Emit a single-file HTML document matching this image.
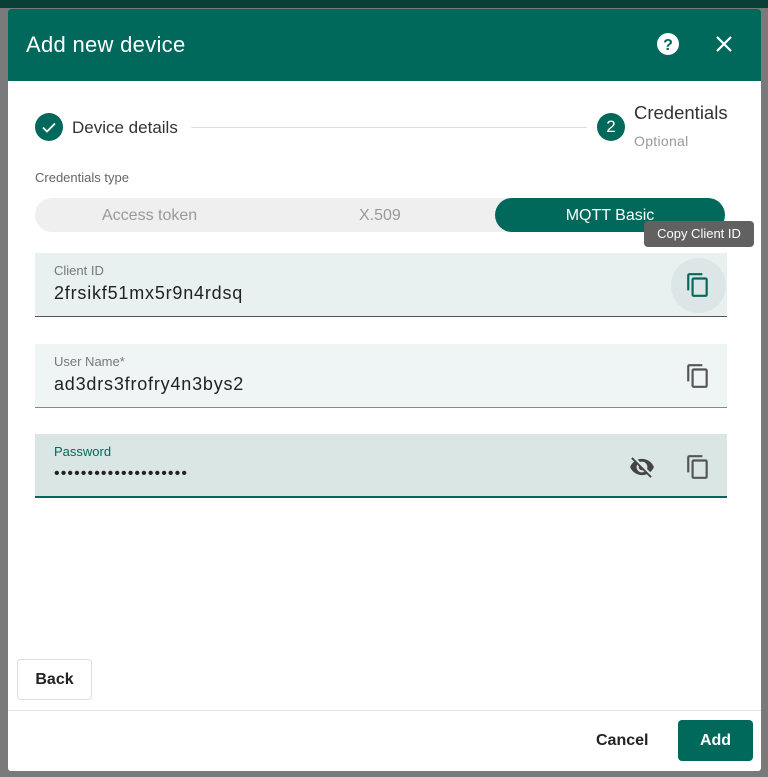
<!DOCTYPE html>
<html><head><meta charset="utf-8"><style>
*{box-sizing:border-box;margin:0;padding:0}
body{width:768px;height:777px;background:#7a7a7a;font-family:"Liberation Sans",sans-serif;position:relative;overflow:hidden}
.bgtop{position:absolute;left:0;top:0;width:768px;height:8px;background:#0a3f37}
.dlg{position:absolute;left:8px;top:9px;width:753px;height:762px;background:#fff;border-radius:3px;overflow:hidden}
.hdr{height:72px;background:#00695c;color:#fff;position:relative}
.hdr h1{position:absolute;left:18px;top:23px;font-size:22px;font-weight:normal;letter-spacing:.3px}
.abs{position:absolute}
.lbl{font-size:13px;color:#666}
.field{position:absolute;left:27px;width:692px;height:64px;border-bottom:1px solid #555}
.field .l{position:absolute;left:19px;top:10px;font-size:13px;color:#777}
.field .v{position:absolute;left:19px;top:30px;font-size:18px;color:#222;letter-spacing:.8px}
.btn{position:absolute;font-size:16px;font-weight:bold;color:#222}
</style></head><body>
<div class="bgtop"></div>
<div class="dlg">
 <div class="hdr"><h1>Add new device</h1>
  <svg class="abs" style="left:648px;top:23px" width="24" height="24" viewBox="0 0 24 24"><circle cx="12" cy="12" r="11" fill="#fff"/><text x="12" y="18" text-anchor="middle" font-size="16" font-weight="bold" fill="#00695c" font-family="Liberation Sans">?</text></svg>
  <svg class="abs" style="left:707px;top:26px" width="18" height="18" viewBox="0 0 18 18"><path d="M2 2L16 16M16 2L2 16" stroke="#fff" stroke-width="2.2"/></svg>
 </div>
 <svg class="abs" style="left:27px;top:104px" width="28" height="28"><circle cx="14" cy="14" r="14" fill="#00695c"/><path d="M8 14.5l4 4 8-8" stroke="#fff" stroke-width="1.8" fill="none"/></svg>
 <div class="abs" style="left:64px;top:109px;font-size:17px;color:#333">Device details</div>
 <div class="abs" style="left:183px;top:118px;width:396px;height:1px;background:#ddd"></div>
 <div class="abs" style="left:589px;top:104px;width:28px;height:28px;border-radius:50%;background:#00695c;color:#fff;font-size:17px;text-align:center;line-height:28px">2</div>
 <div class="abs" style="left:626px;top:93px;font-size:18.5px;color:#333">Credentials</div>
 <div class="abs" style="left:626px;top:124px;font-size:14px;color:#999;letter-spacing:.3px">Optional</div>
 <div class="abs lbl" style="left:27px;top:161px">Credentials type</div>
 <div class="abs" style="left:27px;top:189px;width:690px;height:34px;border-radius:17px;background:#efefef"></div>
 <div class="abs" style="left:94px;top:198px;font-size:16px;color:#999">Access token</div>
 <div class="abs" style="left:351px;top:198px;font-size:16px;color:#999">X.509</div>
 <div class="abs" style="left:487px;top:189px;width:230px;height:34px;border-radius:17px;background:#00695c;color:#fff;font-size:16px;text-align:center;line-height:36px">MQTT Basic</div>
 <div class="field" style="top:244px;background:#e8f0f0"><div class="l">Client ID</div><div class="v">2frsikf51mx5r9n4rdsq</div></div>
 <div class="abs" style="left:663px;top:249px;width:55px;height:55px;border-radius:50%;background:#dde6e6"></div>
 <svg class="abs" style="left:677px;top:263px" width="26" height="26" viewBox="0 0 24 24"><path d="M16 1H4c-1.1 0-2 .9-2 2v14h2V3h12V1zm3 4H8c-1.1 0-2 .9-2 2v14c0 1.1.9 2 2 2h11c1.1 0 2-.9 2-2V7c0-1.1-.9-2-2-2zm0 16H8V7h11v14z" fill="#00695c"/></svg>
 <div class="abs" style="left:636px;top:212px;width:110px;height:26px;background:#616161;border-radius:4px;color:#fff;font-size:13px;line-height:26px;text-align:center">Copy Client ID</div>
 <div class="field" style="top:335px;background:#eff5f5;border-color:#888"><div class="l">User Name*</div><div class="v">ad3drs3frofry4n3bys2</div></div>
 <svg class="abs" style="left:677px;top:354px" width="26" height="26" viewBox="0 0 24 24"><path d="M16 1H4c-1.1 0-2 .9-2 2v14h2V3h12V1zm3 4H8c-1.1 0-2 .9-2 2v14c0 1.1.9 2 2 2h11c1.1 0 2-.9 2-2V7c0-1.1-.9-2-2-2zm0 16H8V7h11v14z" fill="#555"/></svg>
 <div class="field" style="top:425px;background:#d9e6e4;border-bottom:2px solid #00695c"><div class="l" style="color:#00695c">Password</div><div class="v" style="font-size:16px;top:31px;letter-spacing:1.1px">••••••••••••••••••••</div></div>
 <svg class="abs" style="left:621px;top:445px" width="26" height="26" viewBox="0 0 24 24"><path d="M12 7c2.76 0 5 2.24 5 5 0 .65-.13 1.26-.36 1.83l2.92 2.92c1.51-1.26 2.7-2.89 3.43-4.750-1.73-4.390-6-7.500-11-7.500-1.4 0-2.74.25-3.980.7l2.16 2.16C10.74 7.130 11.35 7 12 7zM2 4.27l2.28 2.28.46.46C3.08 8.3 1.78 10.02 1 12c1.73 4.39 6 7.5 11 7.5 1.55 0 3.03-.3 4.38-.84l.42.42L19.73 22 21 20.73 3.27 3 2 4.27zM7.53 9.8l1.55 1.55c-.05.21-.08.43-.08.65 0 1.66 1.34 3 3 3 .22 0 .44-.03.65-.08l1.55 1.55c-.67.33-1.41.53-2.2.53-2.76 0-5-2.24-5-5 0-.79.2-1.53.53-2.2z" fill="#444"/></svg>
 <svg class="abs" style="left:677px;top:445px" width="26" height="26" viewBox="0 0 24 24"><path d="M16 1H4c-1.1 0-2 .9-2 2v14h2V3h12V1zm3 4H8c-1.1 0-2 .9-2 2v14c0 1.1.9 2 2 2h11c1.1 0 2-.9 2-2V7c0-1.1-.9-2-2-2zm0 16H8V7h11v14z" fill="#555"/></svg>
 <div class="abs" style="left:9px;top:650px;width:75px;height:41px;border:1px solid #ddd;border-radius:4px;font-size:16px;font-weight:bold;color:#222;text-align:center;line-height:39px">Back</div>
 <div class="abs" style="left:0;top:701px;width:753px;height:1px;background:#e4e4e4"></div>
 <div class="btn" style="left:588px;top:723px">Cancel</div>
 <div class="abs" style="left:670px;top:711px;width:75px;height:41px;background:#00695c;border-radius:4px;color:#fff;font-size:16px;font-weight:bold;text-align:center;line-height:41px">Add</div>
</div>
</body></html>
